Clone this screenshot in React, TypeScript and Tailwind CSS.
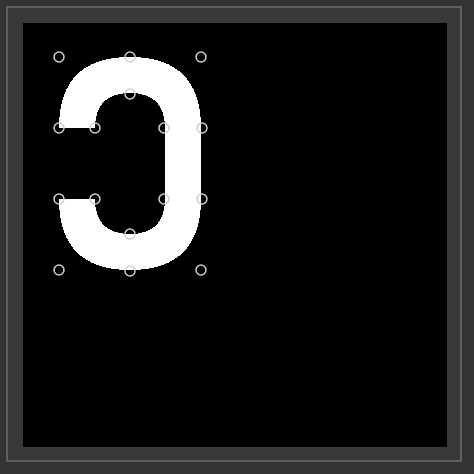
const points: [number, number][] = [
  [59, 57], [130, 57], [201, 57],
  [130, 94],
  [59, 128], [95, 128], [164, 128], [202, 128],
  [59, 199], [95, 199], [164, 199], [202, 199],
  [130, 234],
  [59, 270], [130, 271], [201, 270],
]

// outer contour + counter, quadratic segments
const glyph =
  'M59 128 Q59 57 130 57 Q201 57 201 128 L201 199 Q201 270 130 270 Q59 270 59 199 ' +
  'L95 199 Q95 234 130 234 Q165 234 165 199 L165 128 Q165 93 130 93 Q95 93 95 128 Z'

function GlyphCanvas() {
  return (
    <svg viewBox="23 23 424 424" className="block w-full h-full">
      <path d={glyph} fill="#ffffff" shapeRendering="crispEdges" />
      {points.map(([x, y], i) => (
        <circle key={i} cx={x} cy={y} r={5} fill="none" stroke="#cfcfcf" strokeWidth={1.5} />
      ))}
    </svg>
  )
}

export default function App() {
  return (
    <div className="w-[474px] h-[474px] bg-[#333333] pt-[6px] pl-[6px]">
      <div className="w-[456px] h-[456px] border-2 border-[#5e5e5e] bg-[#383838] pt-[15px] pl-[15px] pr-[13px] pb-[13px]">
        <div className="w-[424px] h-[424px] bg-black">
          <GlyphCanvas />
        </div>
      </div>
    </div>
  )
}
